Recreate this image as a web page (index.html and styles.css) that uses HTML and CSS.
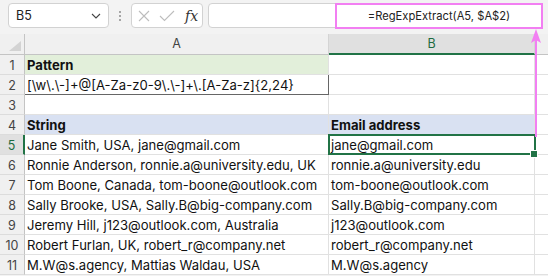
FILE: index.html
```html
<!DOCTYPE html>
<html>
<head>
<meta charset="utf-8">
<link rel="stylesheet" href="styles.css">
</head>
<body>
<div class="app">
  <div class="toolbar">
    <div class="namebox">
      <span class="ref">B5</span>
      <svg class="chev" width="10" height="6" viewBox="0 0 10 6"><path d="M1 1 L5 5 L9 1" fill="none" stroke="#444" stroke-width="1.1"/></svg>
    </div>
    <div class="dots"><i></i><i></i><i></i></div>
    <div class="fxbox">
      <svg width="12" height="12" viewBox="0 0 12 12"><path d="M1 1 L11 11 M11 1 L1 11" stroke="#bdbdbd" stroke-width="1.1" fill="none"/></svg>
      <svg width="16" height="12" viewBox="0 0 16 12"><path d="M1 6 L5.5 10.5 L15 1" stroke="#bdbdbd" stroke-width="1.1" fill="none"/></svg>
      <span class="fx">fx</span>
    </div>
    <div class="formula"></div>
    <div class="callout">=RegExpExtract(A5, $A$2)</div>
  </div>

  <div class="sheet">
    <div class="corner"><svg width="14" height="11" viewBox="0 0 14 11"><path d="M13 0 L13 10 L1 10 Z" fill="#d3d3d3"/></svg></div>
    <div class="ch">A</div>
    <div class="ch sel">B</div>
    <div class="ch last"></div>

    <div class="rh">1</div><div class="c green b">Pattern</div><div class="c"></div><div class="c last"></div>
    <div class="rh">2</div><div class="c boxed">[\w\.\-]+@[A-Za-z0-9\.\-]+\.[A-Za-z]{2,24}</div><div class="c"></div><div class="c last"></div>
    <div class="rh">3</div><div class="c"></div><div class="c"></div><div class="c last"></div>
    <div class="rh">4</div><div class="c blue b">String</div><div class="c blue b">Email address</div><div class="c last"></div>
    <div class="rh selrow">5</div><div class="c">Jane Smith, USA, jane@gmail.com</div><div class="c active">jane@gmail.com</div><div class="c last"></div>
    <div class="rh">6</div><div class="c">Ronnie Anderson, ronnie.a@university.edu, UK</div><div class="c">ronnie.a@university.edu</div><div class="c last"></div>
    <div class="rh">7</div><div class="c">Tom Boone, Canada, tom-boone@outlook.com</div><div class="c">tom-boone@outlook.com</div><div class="c last"></div>
    <div class="rh">8</div><div class="c">Sally Brooke, USA, Sally.B@big-company.com</div><div class="c">Sally.B@big-company.com</div><div class="c last"></div>
    <div class="rh">9</div><div class="c">Jeremy Hill, j123@outlook.com, Australia</div><div class="c">j123@outlook.com</div><div class="c last"></div>
    <div class="rh">10</div><div class="c">Robert Furlan, UK, robert_r@company.net</div><div class="c">robert_r@company.net</div><div class="c last"></div>
    <div class="rh">11</div><div class="c">M.W@s.agency, Mattias Waldau, USA</div><div class="c">M.W@s.agency</div><div class="c last"></div>
  </div>

  <svg class="arrow" width="16" height="110" viewBox="0 0 16 110">
    <path d="M7 10 L9 10 L9 108 L7 108 Z" fill="#f27ff2"/>
    <path d="M8 0 L13 14 L8 11 L3 14 Z" fill="#f27ff2"/>
  </svg>
</div>
</body>
</html>
```

FILE: styles.css
```css
* { box-sizing: border-box; }
html, body { margin: 0; padding: 0; }
body {
  width: 548px;
  height: 276px;
  overflow: hidden;
  background: #f3f3f3;
  font-family: Inter, "Noto Sans", sans-serif;
}
.app { position: relative; width: 548px; height: 276px; }

.toolbar {
  display: flex;
  align-items: flex-start;
  height: 34px;
  padding: 3px 0 0 8px;
}
.namebox {
  width: 101px;
  height: 25px;
  background: #fff;
  border: 1px solid #d2d2d2;
  border-radius: 4px;
  display: flex;
  align-items: center;
  justify-content: space-between;
  padding: 0 7px 0 7px;
  font-size: 12.5px;
  color: #222;
}
.dots {
  width: 22px;
  height: 25px;
  display: flex;
  flex-direction: column;
  align-items: center;
  justify-content: center;
  gap: 2px;
}
.dots i { display: block; width: 2px; height: 2px; background: #8c8c8c; border-radius: 1px; }
.fxbox {
  width: 72px;
  height: 25px;
  background: #fff;
  border: 1px solid #d2d2d2;
  border-radius: 4px;
  display: flex;
  align-items: center;
  gap: 9px;
  padding-left: 6px;
}
.fx {
  font-family: "DejaVu Serif", "Liberation Serif", serif;
  font-style: italic;
  font-size: 14px;
  color: #333;
  margin-left: 1px;
}
.formula {
  margin-left: 5px;
  width: 335px;
  height: 25px;
  background: #fff;
  border: 1px solid #d2d2d2;
  border-radius: 4px 0 0 4px;
}
.callout {
  position: absolute;
  left: 335px;
  top: 3px;
  width: 208px;
  height: 26px;
  border: 2px solid #f27ff2;
  background: #fff;
  display: flex;
  align-items: center;
  justify-content: center;
  font-size: 11.2px;
  color: #222;
}

.sheet {
  display: grid;
  grid-template-columns: 25px 304px 206px 13px;
  grid-template-rows: 21px;
  grid-auto-rows: 20px;
  font-size: 13.1px;
  color: #111;
}
.corner {
  background: #f0f0f0;
  border-right: 1px solid #c4c4c4;
  border-bottom: 1px solid #c4c4c4;
  display: flex;
  align-items: flex-end;
  justify-content: flex-end;
  padding: 0 2px 2px 0;
}
.ch {
  background: #f0f0f0;
  border-right: 1px solid #d4d4d4;
  border-bottom: 1px solid #c4c4c4;
  text-align: center;
  line-height: 20px;
  font-size: 12.5px;
  color: #444;
}
.ch.sel {
  background: #e0e0e0;
  color: #1e6b40;
  border-bottom: 2px solid #217346;
}
.ch.last { border-right: none; }
.rh {
  background: #f0f0f0;
  border-right: 1px solid #c4c4c4;
  border-bottom: 1px solid #dcdcdc;
  text-align: center;
  line-height: 21px;
  font-size: 12.5px;
  color: #444;
}
.rh.selrow {
  background: #e0e0e0;
  color: #1e6b40;
  border-right: 2px solid #217346;
}
.c {
  background: #fff;
  border-right: 1px solid #e1e1e1;
  border-bottom: 1px solid #e1e1e1;
  padding-left: 2px;
  line-height: 21px;
  white-space: nowrap;
}
.c.last { border-right: none; }
.b { font-weight: bold; }
.green { background: #e2efda; }
.blue { background: #d9e1f2; }
.boxed {
  border-right: 1px solid #666;
  border-bottom: 1px solid #666;
}
.active { position: relative; }
.active::after {
  content: "";
  position: absolute;
  left: -1px;
  top: -1px;
  right: -2px;
  bottom: -1px;
  border: 2px solid #217346;
}
.active::before {
  content: "";
  position: absolute;
  right: -4px;
  bottom: -4px;
  width: 6px;
  height: 6px;
  background: #217346;
  border: 1px solid #fff;
  z-index: 2;
}
.arrow {
  position: absolute;
  left: 528px;
  top: 29px;
}
```
